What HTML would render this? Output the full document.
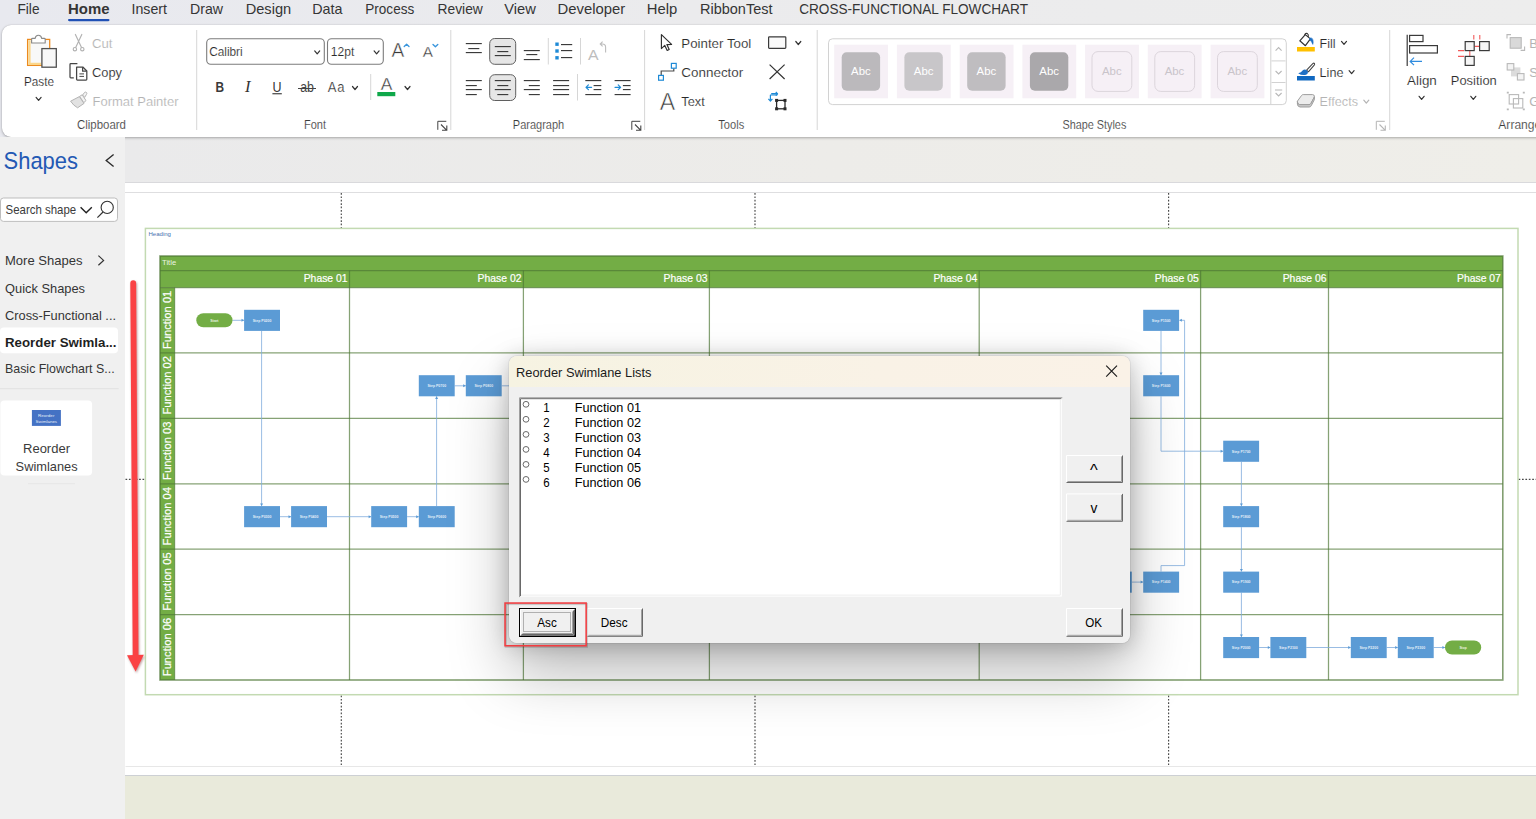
<!DOCTYPE html>
<html lang="en">
<head>
<meta charset="utf-8">
<title>Cross-Functional Flowchart - Reorder Swimlane Lists</title>
<style>
html,body{margin:0;padding:0;background:#f0f0f0;}
body{width:1536px;height:819px;overflow:hidden;font-family:"Liberation Sans",sans-serif;}
#app{position:relative;width:1536px;height:819px;overflow:hidden;background:#f0f0f0;}
#app svg{position:absolute;left:0;top:0;overflow:visible;}
#app svg text{font-family:"Liberation Sans",sans-serif;white-space:pre;}
.abs{position:absolute;}
#tabbar{left:0;top:0;width:1536px;height:140px;background:linear-gradient(90deg,#e8e9ef 0%,#ebebed 45%,#ededed 100%);}
#ribbon{left:2px;top:25px;width:1560px;height:111.5px;background:#fff;border-radius:9px;box-shadow:0 1px 3px rgba(0,0,0,.28),0 0 1px rgba(0,0,0,.2);}
#sidebar{left:0;top:137px;width:125px;height:682px;background:#f0f0f0;}
#strip{left:125px;top:137px;width:1411px;height:45px;background:linear-gradient(90deg,#eaeaeb 0%,#edece9 50%,#efeee9 100%);z-index:0;}
#page{left:125px;top:182px;width:1411px;height:593px;background:#fff;border-top:1px solid #d9d9dc;box-sizing:border-box;}
#below{left:125px;top:775px;width:1411px;height:44px;background:#e9eadb;border-top:1px solid #cdd0d4;box-sizing:border-box;}
#dlgshadow{left:509px;top:355.5px;width:621px;height:287px;border-radius:8px;box-shadow:0 30px 60px rgba(0,0,0,.27),0 2px 21px rgba(0,0,0,.22),0 0 1px rgba(0,0,0,.5);background:#f0f0f0;}
#dlg{left:509px;top:355.5px;width:621px;height:287px;border-radius:8px;background:#f0f0f0;overflow:hidden;}
#dlgtitle{left:0;top:0;width:100%;height:31.5px;background:linear-gradient(90deg,#f6f3e2 0%,#f9f2e6 60%,#faf2e7 100%);}
</style>
</head>
<body>
<div id="app">
<div id="tabbar" class="abs"></div>
<div id="strip" class="abs"></div>
<div id="ribbon" class="abs"></div>
<div id="sidebar" class="abs"></div>
<div id="page" class="abs"></div>
<div id="below" class="abs"></div>
<svg id="ribbonsvg" width="1536" height="140" viewBox="0 0 1536 140">
<text x="17.5" y="13.7" font-size="15" fill="#353535" textLength="22.0" lengthAdjust="spacingAndGlyphs">File</text>
<text x="68" y="13.7" font-size="15" fill="#353535" textLength="41.5" lengthAdjust="spacingAndGlyphs" font-weight="bold">Home</text>
<text x="131.5" y="13.7" font-size="15" fill="#353535" textLength="35.5" lengthAdjust="spacingAndGlyphs">Insert</text>
<text x="190" y="13.7" font-size="15" fill="#353535" textLength="33" lengthAdjust="spacingAndGlyphs">Draw</text>
<text x="245.7" y="13.7" font-size="15" fill="#353535" textLength="45.5" lengthAdjust="spacingAndGlyphs">Design</text>
<text x="312.3" y="13.7" font-size="15" fill="#353535" textLength="30.2" lengthAdjust="spacingAndGlyphs">Data</text>
<text x="365.3" y="13.7" font-size="15" fill="#353535" textLength="48.9" lengthAdjust="spacingAndGlyphs">Process</text>
<text x="437.5" y="13.7" font-size="15" fill="#353535" textLength="45.3" lengthAdjust="spacingAndGlyphs">Review</text>
<text x="504.2" y="13.7" font-size="15" fill="#353535" textLength="31.6" lengthAdjust="spacingAndGlyphs">View</text>
<text x="557.5" y="13.7" font-size="15" fill="#353535" textLength="67.8" lengthAdjust="spacingAndGlyphs">Developer</text>
<text x="646.7" y="13.7" font-size="15" fill="#353535" textLength="30.5" lengthAdjust="spacingAndGlyphs">Help</text>
<text x="700" y="13.7" font-size="15" fill="#353535" textLength="72.5" lengthAdjust="spacingAndGlyphs">RibbonTest</text>
<text x="799.2" y="13.7" font-size="15" fill="#353535" textLength="228.8" lengthAdjust="spacingAndGlyphs">CROSS-FUNCTIONAL FLOWCHART</text>
<rect x="68" y="19" width="41.5" height="2.2" rx="1.1" fill="#1f50b5"/>
<rect x="196.2" y="30" width="1" height="100" fill="#d6d6d6"/>
<rect x="450.3" y="30" width="1" height="100" fill="#d6d6d6"/>
<rect x="644.1" y="30" width="1" height="100" fill="#d6d6d6"/>
<rect x="816.7" y="30" width="1" height="100" fill="#d6d6d6"/>
<rect x="1389.2" y="30" width="1" height="100" fill="#d6d6d6"/>
<text x="77" y="129.2" font-size="12" fill="#3b3b3b" textLength="49" lengthAdjust="spacingAndGlyphs" stroke="#fff" stroke-width="0.14">Clipboard</text>
<text x="304" y="129.2" font-size="12" fill="#3b3b3b" textLength="22" lengthAdjust="spacingAndGlyphs" stroke="#fff" stroke-width="0.14">Font</text>
<text x="512.8" y="129.2" font-size="12" fill="#3b3b3b" textLength="51.4" lengthAdjust="spacingAndGlyphs" stroke="#fff" stroke-width="0.14">Paragraph</text>
<text x="718.3" y="129.2" font-size="12" fill="#3b3b3b" textLength="25.9" lengthAdjust="spacingAndGlyphs" stroke="#fff" stroke-width="0.14">Tools</text>
<text x="1062.5" y="129.2" font-size="12" fill="#3b3b3b" textLength="63.8" lengthAdjust="spacingAndGlyphs" stroke="#fff" stroke-width="0.14">Shape Styles</text>
<text x="1498.3" y="129.2" font-size="12" fill="#3b3b3b" textLength="43" lengthAdjust="spacingAndGlyphs" stroke="#fff" stroke-width="0.14">Arrange</text>
<path d="M437.8 129.8V121.3H446.3" fill="none" stroke="#444" stroke-width="1"/><path d="M441.0 124.5L446.8 130.3M446.8 125.5V130.3H442.0" fill="none" stroke="#444" stroke-width="1.1"/>
<path d="M631.8 129.8V121.3H640.3" fill="none" stroke="#444" stroke-width="1"/><path d="M635.0 124.5L640.8 130.3M640.8 125.5V130.3H636.0" fill="none" stroke="#444" stroke-width="1.1"/>
<path d="M1376.3 129.8V121.3H1384.8" fill="none" stroke="#b5b5b5" stroke-width="1"/><path d="M1379.5 124.5L1385.3 130.3M1385.3 125.5V130.3H1380.5" fill="none" stroke="#b5b5b5" stroke-width="1.1"/>
<g><rect x="27.6" y="39.4" width="22.1" height="26" fill="#f8f8f8" stroke="#ec8a1e" stroke-width="1.25"/><path d="M29.5 40.2V63.9H41.4" fill="none" stroke="#fbd68a" stroke-width="2.2"/><path d="M31.6 43V39.2Q31.6 38.3 32.5 38.3H35.2Q35.5 35.2 38.4 35.2Q41.3 35.2 41.6 38.3H44.3Q45.2 38.3 45.2 39.2V43Z" fill="#fff" stroke="#8a8a8a" stroke-width="1.15" stroke-linejoin="round"/><rect x="41.9" y="48.6" width="14.4" height="18.6" fill="#f8f8f8" stroke="#505050" stroke-width="1.3"/></g>
<text x="24" y="85.8" font-size="13" fill="#2a2a2a" textLength="30" lengthAdjust="spacingAndGlyphs" stroke="#fff" stroke-width="0.14">Paste</text>
<path d="M36.1 97.4L38.6 100.4L41.1 97.4" fill="none" stroke="#333" stroke-width="1.2" stroke-linecap="round" stroke-linejoin="round"/>
<g fill="none" stroke="#b2b2b2" stroke-width="1.15" stroke-linecap="round"><path d="M75.4 34.4L81.4 47.3M81.8 34.4L75.8 47.3"/><circle cx="74.9" cy="49.2" r="1.7"/><circle cx="82.3" cy="49.2" r="1.7"/></g>
<text x="92" y="47.8" font-size="13" fill="#b4b4b4" textLength="20.5" lengthAdjust="spacingAndGlyphs" stroke="#fff" stroke-width="0.14">Cut</text>
<g fill="none" stroke="#454545" stroke-width="1.25" stroke-linejoin="round"><path d="M73.8 77.8H70.8Q70 77.8 70 77V64.4Q70 63.6 70.8 63.6H77.4"/><path d="M76.6 67H82.8L86.8 71V79.2Q86.8 80 86 80H77.4Q76.6 80 76.6 79.2Z" fill="#fff"/><path d="M82.6 67.2V71.2H86.6"/><path d="M79.4 73.9H84M79.4 76.4H84" stroke-width="1"/></g>
<text x="92" y="77" font-size="13" fill="#2a2a2a" textLength="30" lengthAdjust="spacingAndGlyphs" stroke="#fff" stroke-width="0.14">Copy</text>
<g fill="#e2e2e2" stroke="#b4b4b4" stroke-width="1" stroke-linejoin="round"><path d="M70.6 101.2L79.4 96.6L84 103.4L77.6 107.8Q73.4 105.6 70.6 101.2Z"/><path d="M79.6 96.4L82.2 94.8L86 100.6L83.8 102.6Z" fill="#f3f3f3"/><path d="M82.6 95L84.6 92.4Q85.8 91.6 86.6 92.6Q87.2 93.6 86.4 94.6L84.6 97.4Z" fill="#f3f3f3"/></g>
<text x="92.5" y="106" font-size="13" fill="#b4b4b4" textLength="86" lengthAdjust="spacingAndGlyphs" stroke="#fff" stroke-width="0.14">Format Painter</text>
<rect x="206.7" y="38.8" width="117.6" height="25.4" rx="4" fill="#fff" stroke="#7c7c7c" stroke-width="1.1"/>
<rect x="327.5" y="38.8" width="55.8" height="25.4" rx="4" fill="#fff" stroke="#7c7c7c" stroke-width="1.1"/>
<text x="209.2" y="55.8" font-size="13" fill="#2a2a2a" textLength="33.5" lengthAdjust="spacingAndGlyphs" stroke="#fff" stroke-width="0.14">Calibri</text>
<text x="330.8" y="55.8" font-size="13" fill="#2a2a2a" textLength="23.5" lengthAdjust="spacingAndGlyphs" stroke="#fff" stroke-width="0.14">12pt</text>
<path d="M314.7 50.9L317.2 53.9L319.7 50.9" fill="none" stroke="#333" stroke-width="1.2" stroke-linecap="round" stroke-linejoin="round"/>
<path d="M374.1 50.9L376.6 53.9L379.1 50.9" fill="none" stroke="#333" stroke-width="1.2" stroke-linecap="round" stroke-linejoin="round"/>
<text x="391.6" y="56.9" font-size="20" fill="#3a3a3a" textLength="12.8" lengthAdjust="spacingAndGlyphs" stroke="#fff" stroke-width="0.5">A</text>
<path d="M404.2 46.6L406.6 44.2L409 46.6" fill="none" stroke="#3a96dd" stroke-width="1.35" stroke-linecap="round" stroke-linejoin="round"/>
<text x="422.8" y="56.9" font-size="15.2" fill="#3a3a3a" textLength="10.2" lengthAdjust="spacingAndGlyphs" stroke="#fff" stroke-width="0.3">A</text>
<path d="M433 44.4L435.4 46.8L437.8 44.4" fill="none" stroke="#3a96dd" stroke-width="1.35" stroke-linecap="round" stroke-linejoin="round"/>
<text x="215.6" y="91.7" font-size="15" fill="#3a3a3a" textLength="8.6" lengthAdjust="spacingAndGlyphs" font-weight="bold">B</text>
<text x="245" y="91.8" font-size="16.5" fill="#333" font-style="italic" style="font-family:'Liberation Serif',serif">I</text>
<text x="272.6" y="91.7" font-size="14.6" fill="#333" textLength="9" lengthAdjust="spacingAndGlyphs">U</text>
<rect x="272.4" y="93.2" width="9.4" height="1.1" fill="#333"/>
<text x="300.2" y="91.9" font-size="14" fill="#444" textLength="13.8" lengthAdjust="spacingAndGlyphs">ab</text>
<rect x="298" y="88" width="18" height="1" fill="#444"/>
<text x="327.8" y="91.9" font-size="14.4" fill="#333" textLength="17.4" lengthAdjust="spacingAndGlyphs" letter-spacing="0.8" stroke="#fff" stroke-width="0.2">Aa</text>
<path d="M352.5 86.5L355 89.5L357.5 86.5" fill="none" stroke="#333" stroke-width="1.2" stroke-linecap="round" stroke-linejoin="round"/>
<rect x="370.2" y="74" width="1" height="26" fill="#d6d6d6"/>
<text x="380.7" y="90.4" font-size="16.3" fill="#3a3a3a" textLength="11.6" lengthAdjust="spacingAndGlyphs" stroke="#fff" stroke-width="0.3">A</text>
<rect x="377.3" y="92" width="18" height="4.2" fill="#0fa84a"/>
<path d="M405.0 86.5L407.5 89.5L410.0 86.5" fill="none" stroke="#333" stroke-width="1.2" stroke-linecap="round" stroke-linejoin="round"/>
<rect x="489.7" y="38.5" width="26" height="25.8" rx="5" fill="#e6e6e6" stroke="#5f5f5f" stroke-width="1"/>
<rect x="489.7" y="74.7" width="26" height="25.8" rx="5" fill="#e6e6e6" stroke="#5f5f5f" stroke-width="1"/>
<rect x="465.8" y="43" width="16" height="1.15" fill="#3b3b3b"/><rect x="468.3" y="48" width="11" height="1.15" fill="#3b3b3b"/><rect x="465.8" y="52" width="16" height="1.15" fill="#3b3b3b"/>
<rect x="494.8" y="46" width="16" height="1.15" fill="#3b3b3b"/><rect x="497.3" y="51" width="11" height="1.15" fill="#3b3b3b"/><rect x="494.8" y="55" width="16" height="1.15" fill="#3b3b3b"/>
<rect x="523.8" y="50" width="16" height="1.15" fill="#3b3b3b"/><rect x="526.3" y="54" width="11" height="1.15" fill="#3b3b3b"/><rect x="523.8" y="59" width="16" height="1.15" fill="#3b3b3b"/>
<rect x="547.8" y="38" width="1" height="26.5" fill="#d6d6d6"/>
<rect x="555.3" y="42.5" width="3.4" height="3.4" fill="#1e8ad6"/>
<rect x="561" y="44" width="11.2" height="1.15" fill="#3b3b3b"/>
<rect x="555.3" y="49.3" width="3.4" height="3.4" fill="#1e8ad6"/>
<rect x="561" y="50" width="11.2" height="1.15" fill="#3b3b3b"/>
<rect x="555.3" y="56.099999999999994" width="3.4" height="3.4" fill="#1e8ad6"/>
<rect x="561" y="57" width="11.2" height="1.15" fill="#3b3b3b"/>
<rect x="580" y="38" width="1" height="26.5" fill="#d6d6d6"/>
<text x="588" y="59.7" font-size="15" fill="#bdbdbd" textLength="10.6" lengthAdjust="spacingAndGlyphs">A</text>
<path d="M605.6 52.4V47.2Q605.6 44 602.4 44H600.4M602.6 41.6L600.2 44L602.6 46.4" fill="none" stroke="#bdbdbd" stroke-width="1.1"/>
<rect x="465.8" y="80" width="16" height="1.15" fill="#3b3b3b"/><rect x="465.8" y="85" width="11" height="1.15" fill="#3b3b3b"/><rect x="465.8" y="89" width="16" height="1.15" fill="#3b3b3b"/><rect x="465.8" y="94" width="11" height="1.15" fill="#3b3b3b"/>
<rect x="494.8" y="80" width="16" height="1.15" fill="#3b3b3b"/><rect x="497.3" y="85" width="11" height="1.15" fill="#3b3b3b"/><rect x="494.8" y="89" width="16" height="1.15" fill="#3b3b3b"/><rect x="497.3" y="94" width="11" height="1.15" fill="#3b3b3b"/>
<rect x="523.8" y="80" width="16" height="1.15" fill="#3b3b3b"/><rect x="528.8" y="85" width="11" height="1.15" fill="#3b3b3b"/><rect x="523.8" y="89" width="16" height="1.15" fill="#3b3b3b"/><rect x="528.8" y="94" width="11" height="1.15" fill="#3b3b3b"/>
<rect x="553.1" y="80" width="16" height="1.15" fill="#3b3b3b"/><rect x="553.1" y="85" width="16" height="1.15" fill="#3b3b3b"/><rect x="553.1" y="89" width="16" height="1.15" fill="#3b3b3b"/><rect x="553.1" y="94" width="16" height="1.15" fill="#3b3b3b"/>
<rect x="577" y="74" width="1" height="26.5" fill="#d6d6d6"/>
<rect x="585.3" y="80" width="16" height="1.15" fill="#3b3b3b"/><rect x="585.3" y="94" width="16" height="1.15" fill="#3b3b3b"/>
<rect x="593.6" y="85" width="7.7" height="1.15" fill="#3b3b3b"/><rect x="593.6" y="89" width="7.7" height="1.15" fill="#3b3b3b"/>
<path d="M591.6 87.3H586M588.4 84.9L586 87.3L588.4 89.7" fill="none" stroke="#1e8ad6" stroke-width="1.2" stroke-linecap="round" stroke-linejoin="round"/>
<rect x="614.6" y="80" width="16" height="1.15" fill="#3b3b3b"/><rect x="614.6" y="94" width="16" height="1.15" fill="#3b3b3b"/>
<rect x="622.9" y="85" width="7.7" height="1.15" fill="#3b3b3b"/><rect x="622.9" y="89" width="7.7" height="1.15" fill="#3b3b3b"/>
<path d="M615 87.3H620.6M618.2 84.9L620.6 87.3L618.2 89.7" fill="none" stroke="#1e8ad6" stroke-width="1.2" stroke-linecap="round" stroke-linejoin="round"/>
<path d="M661.4 34.6V48.6L664.8 45.4L667.2 50.4L669.2 49.4L666.9 44.6L671.6 44.4Z" fill="#fff" stroke="#2f2f2f" stroke-width="1.15" stroke-linejoin="round"/>
<text x="681.3" y="47.8" font-size="13" fill="#2a2a2a" textLength="70" lengthAdjust="spacingAndGlyphs" stroke="#fff" stroke-width="0.14">Pointer Tool</text>
<rect x="768.6" y="36.8" width="17.2" height="11.6" rx="0.8" fill="#fafafa" stroke="#3a3a3a" stroke-width="1.2"/>
<path d="M795.8 41.5L798.3 44.5L800.8 41.5" fill="none" stroke="#333" stroke-width="1.2" stroke-linecap="round" stroke-linejoin="round"/>
<path d="M661.2 75.4V71H673.8V68.2" fill="none" stroke="#4a4a4a" stroke-width="1.2"/>
<rect x="658.6" y="75.4" width="4.8" height="4.8" fill="#fff" stroke="#1e8ad6" stroke-width="1.2"/>
<rect x="671.4" y="63.4" width="4.8" height="4.8" fill="#fff" stroke="#1e8ad6" stroke-width="1.2"/>
<text x="681.3" y="77" font-size="13" fill="#2a2a2a" textLength="62" lengthAdjust="spacingAndGlyphs" stroke="#fff" stroke-width="0.14">Connector</text>
<path d="M769.6 64.6L784.6 79M784.6 64.6L769.6 79" fill="none" stroke="#333" stroke-width="1.2"/>
<text x="659.8" y="109.6" font-size="24.5" fill="#3a3a3a" textLength="15.4" lengthAdjust="spacingAndGlyphs" stroke="#fff" stroke-width="0.65">A</text>
<text x="681.3" y="106" font-size="13" fill="#2a2a2a" textLength="23.4" lengthAdjust="spacingAndGlyphs" stroke="#fff" stroke-width="0.14">Text</text>
<g fill="none" stroke="#1e8ad6" stroke-width="1.2" stroke-linejoin="round"><path d="M770.4 100.6V95H777.4M771.2 93.6H777.4"/><path d="M768.4 98.8L770.4 101L772.4 98.8M775.8 92L777.6 93.8L775.8 95.6"/></g>
<rect x="776.6" y="100.4" width="8.4" height="8.4" fill="none" stroke="#2a2a2a" stroke-width="1.3"/>
<rect x="775.1" y="98.9" width="3" height="3" fill="#2a2a2a"/>
<rect x="783.5" y="98.9" width="3" height="3" fill="#2a2a2a"/>
<rect x="775.1" y="107.3" width="3" height="3" fill="#2a2a2a"/>
<rect x="783.5" y="107.3" width="3" height="3" fill="#2a2a2a"/>
<rect x="828.5" y="38.8" width="457.8" height="65.8" rx="4" fill="#fff" stroke="#d2d2d2" stroke-width="1"/>
<rect x="834.2" y="44.7" width="53.8" height="53.6" fill="#f6f0f6"/>
<rect x="841.7" y="52.2" width="38.4" height="38.6" rx="5" fill="#bbb9bc"/>
<text x="860.9" y="75.2" font-size="10.5" fill="#ffffff" textLength="19.6" lengthAdjust="spacingAndGlyphs" text-anchor="middle">Abc</text>
<rect x="896.9" y="44.7" width="53.8" height="53.6" fill="#f6f0f6"/>
<rect x="904.4" y="52.2" width="38.4" height="38.6" rx="5" fill="#c8c6c9"/>
<text x="923.6" y="75.2" font-size="10.5" fill="#ffffff" textLength="19.6" lengthAdjust="spacingAndGlyphs" text-anchor="middle">Abc</text>
<rect x="959.7" y="44.7" width="53.8" height="53.6" fill="#f6f0f6"/>
<rect x="967.2" y="52.2" width="38.4" height="38.6" rx="5" fill="#bfbdc0"/>
<text x="986.4" y="75.2" font-size="10.5" fill="#ffffff" textLength="19.6" lengthAdjust="spacingAndGlyphs" text-anchor="middle">Abc</text>
<rect x="1022.4" y="44.7" width="53.8" height="53.6" fill="#f6f0f6"/>
<rect x="1029.9" y="52.2" width="38.4" height="38.6" rx="5" fill="#aaa8ab"/>
<text x="1049.1" y="75.2" font-size="10.5" fill="#ffffff" textLength="19.6" lengthAdjust="spacingAndGlyphs" text-anchor="middle">Abc</text>
<rect x="1085.1" y="44.7" width="53.8" height="53.6" fill="#f6f0f6"/>
<rect x="1092.0" y="51.6" width="39.8" height="39.8" rx="6" fill="#f6f0f6" stroke="#dcd5dc" stroke-width="1"/>
<text x="1111.8" y="75.2" font-size="10.5" fill="#c9c4ca" textLength="19.6" lengthAdjust="spacingAndGlyphs" text-anchor="middle">Abc</text>
<rect x="1147.8" y="44.7" width="53.8" height="53.6" fill="#f6f0f6"/>
<rect x="1154.8" y="51.6" width="39.8" height="39.8" rx="6" fill="#f6f0f6" stroke="#dcd5dc" stroke-width="1"/>
<text x="1174.5" y="75.2" font-size="10.5" fill="#c9c4ca" textLength="19.6" lengthAdjust="spacingAndGlyphs" text-anchor="middle">Abc</text>
<rect x="1210.6" y="44.7" width="53.8" height="53.6" fill="#f6f0f6"/>
<rect x="1217.5" y="51.6" width="39.8" height="39.8" rx="6" fill="#f6f0f6" stroke="#dcd5dc" stroke-width="1"/>
<text x="1237.3" y="75.2" font-size="10.5" fill="#c9c4ca" textLength="19.6" lengthAdjust="spacingAndGlyphs" text-anchor="middle">Abc</text>
<rect x="1270.3" y="39" width="1" height="65.4" fill="#d2d2d2"/>
<rect x="1271.5" y="60.4" width="14" height="1" fill="#d2d2d2"/><rect x="1271.5" y="82" width="14" height="1" fill="#d2d2d2"/>
<path d="M1275.6 50.6L1278.6 47.6L1281.6 50.6" fill="none" stroke="#b8b8b8" stroke-width="1.1"/>
<path d="M1275.6 71L1278.6 74L1281.6 71" fill="none" stroke="#b8b8b8" stroke-width="1.1"/>
<path d="M1275 90H1282.2M1275.6 93L1278.6 96L1281.6 93" fill="none" stroke="#b8b8b8" stroke-width="1.1"/>
<path d="M1299.8 40.8L1305.3 34.6L1310.4 38.9L1305.4 45.7Z" fill="#fff" stroke="#333" stroke-width="1.2" stroke-linejoin="round"/>
<path d="M1304.6 35.4Q1305.4 32.6 1307.4 33.6Q1308.8 34.6 1308.2 37" fill="none" stroke="#333" stroke-width="1.1"/>
<path d="M1309.6 38.2Q1312.4 37 1313 40.4Q1313.4 42.6 1312.8 44.4Q1311.8 41.2 1309.8 40Z" fill="#1e6fc4" stroke="#1e6fc4" stroke-width="0.6"/>
<rect x="1297" y="47" width="17.8" height="4.5" fill="#ffc000"/>
<text x="1319.6" y="47.9" font-size="13" fill="#2a2a2a" textLength="16" lengthAdjust="spacingAndGlyphs" stroke="#fff" stroke-width="0.14">Fill</text>
<path d="M1341.5 41.4L1344 44.4L1346.5 41.4" fill="none" stroke="#333" stroke-width="1.2" stroke-linecap="round" stroke-linejoin="round"/>
<path d="M1306.6 70.2L1312.8 63.6Q1313.8 62.8 1314.4 63.4Q1315 64.2 1314.2 65.2L1308.4 71.8Z" fill="#fff" stroke="#444" stroke-width="1.05" stroke-linejoin="round"/>
<path d="M1298.2 73.2Q1301.4 72.8 1302.6 70.6Q1304.4 68.4 1306.8 70.2Q1309 72.2 1307 74.2Q1302.6 76.4 1298.2 73.2Z" fill="#1e6fc4"/>
<rect x="1297" y="76" width="17.8" height="4.5" fill="#1068c0"/>
<text x="1319.6" y="77.1" font-size="13" fill="#2a2a2a" textLength="23.8" lengthAdjust="spacingAndGlyphs" stroke="#fff" stroke-width="0.14">Line</text>
<path d="M1349.1 70.6L1351.6 73.6L1354.1 70.6" fill="none" stroke="#333" stroke-width="1.2" stroke-linecap="round" stroke-linejoin="round"/>
<path d="M1297.4 101.2L1301.6 95.4Q1302.2 94.6 1303.2 94.6H1312.6Q1314.8 94.8 1314.4 97L1310.8 103.6Q1310.2 104.6 1309 104.6H1299.4Q1297 104.2 1297.4 101.2Z" fill="#ececec" stroke="#9e9e9e" stroke-width="1" stroke-linejoin="round"/>
<path d="M1297.4 101.6V104.2Q1297.6 106.6 1300 107H1309.2Q1310.6 107 1311.2 105.8L1314.4 99.6V97L1310.8 103.6Q1310.2 104.6 1309 104.6H1299.4Q1297.4 104.2 1297.4 101.6Z" fill="#c9c9c9" stroke="#9e9e9e" stroke-width="1" stroke-linejoin="round"/>
<text x="1319.6" y="106.4" font-size="13" fill="#b4b4b4" textLength="38.4" lengthAdjust="spacingAndGlyphs" stroke="#fff" stroke-width="0.14">Effects</text>
<path d="M1363.8 100.1L1366.3 103.1L1368.8 100.1" fill="none" stroke="#b4b4b4" stroke-width="1.2" stroke-linecap="round" stroke-linejoin="round"/>
<g fill="#fff" stroke="#3a3a3a" stroke-width="1.2"><path d="M1407.2 34.8V66" fill="none"/><rect x="1409.6" y="35.4" width="13.4" height="6.2"/><rect x="1409.6" y="45.6" width="27.8" height="7.4"/></g>
<path d="M1422 61.4H1410.4M1414 57.6L1410.2 61.4L1414 65.2" fill="none" stroke="#2f8bde" stroke-width="1.2"/>
<text x="1407" y="85" font-size="13" fill="#2a2a2a" textLength="29.8" lengthAdjust="spacingAndGlyphs" stroke="#fff" stroke-width="0.14">Align</text>
<path d="M1419.1 96.3L1421.6 99.3L1424.1 96.3" fill="none" stroke="#333" stroke-width="1.2" stroke-linecap="round" stroke-linejoin="round"/>
<g fill="none" stroke="#f25a5a" stroke-width="1.1"><path d="M1473.8 35V39.6M1479.8 35V39.6M1458 50.6H1464M1458 56.4H1464M1469.8 50.8V56M1474.8 46.4H1479"/></g>
<g fill="#f6f6f6" stroke="#3a3a3a" stroke-width="1.2"><rect x="1465.2" y="41.6" width="9" height="9"/><rect x="1479.6" y="41.6" width="9.6" height="9"/><rect x="1465.2" y="56.4" width="9" height="9"/></g>
<text x="1450.8" y="85" font-size="13" fill="#2a2a2a" textLength="46" lengthAdjust="spacingAndGlyphs" stroke="#fff" stroke-width="0.14">Position</text>
<path d="M1470.8 96.3L1473.3 99.3L1475.8 96.3" fill="none" stroke="#333" stroke-width="1.2" stroke-linecap="round" stroke-linejoin="round"/>
<g fill="none" stroke="#b9b9b9" stroke-width="1.1"><path d="M1511 34.6H1507V38.6M1520.6 50.4H1524.6V46.4"/><rect x="1510.2" y="37.6" width="11" height="10.6" fill="#d9d9d9"/><rect x="1511" y="67.4" width="9.4" height="9" fill="#dcdcdc" stroke="none"/><rect x="1507.2" y="63.6" width="6.6" height="6.4" fill="#f4f4f4"/><rect x="1517.4" y="73.6" width="6.6" height="6.4" fill="#f4f4f4"/><rect x="1509.2" y="94.6" width="9.4" height="9.4"/><rect x="1513.4" y="98.6" width="9.4" height="9.4"/><path d="M1506.8 92.6H1508.8M1522.8 92.6H1524.8M1506.8 109.4H1508.8M1522.8 109.4H1524.8" stroke-width="1.8"/></g>
<text x="1529.2" y="47.9" font-size="13" fill="#b4b4b4">Bring</text>
<text x="1529.2" y="77.1" font-size="13" fill="#b4b4b4">Send</text>
<text x="1529.2" y="106.4" font-size="13" fill="#b4b4b4">Group</text>
</svg>
<svg id="sidesvg" width="130" height="819" viewBox="0 0 130 819">
<text x="3.6" y="169.3" font-size="24.5" fill="#2359b4" textLength="74.4" lengthAdjust="spacingAndGlyphs">Shapes</text>
<path d="M113.6 154.4L106.2 160.4L113.6 166.4" fill="none" stroke="#2b2b2b" stroke-width="1.35"/>
<rect x="0.5" y="198" width="117" height="23.4" rx="3" fill="#fff" stroke="#bdbdbd" stroke-width="1"/>
<text x="5.6" y="214" font-size="13" fill="#3b3b3b" textLength="70.6" lengthAdjust="spacingAndGlyphs">Search shape</text>
<path d="M80.6 207.2L86.2 212.8L91.8 207.2" fill="none" stroke="#222" stroke-width="1.4"/>
<circle cx="107.2" cy="207.4" r="6.1" fill="none" stroke="#333" stroke-width="1.1"/><path d="M103 212L97.4 217.6" stroke="#333" stroke-width="1.2"/>
<text x="5" y="265.2" font-size="13.6" fill="#353535" textLength="77.6" lengthAdjust="spacingAndGlyphs">More Shapes</text>
<path d="M98.4 255.6L103.6 260.4L98.4 265.2" fill="none" stroke="#333" stroke-width="1.2"/>
<text x="5" y="292.5" font-size="13.6" fill="#353535" textLength="80" lengthAdjust="spacingAndGlyphs">Quick Shapes</text>
<text x="5" y="319.5" font-size="13.6" fill="#353535" textLength="111" lengthAdjust="spacingAndGlyphs">Cross-Functional ...</text>
<rect x="0" y="327.6" width="118" height="25.6" rx="4" fill="#fff"/>
<text x="5" y="346.7" font-size="13.6" fill="#1f1f1f" textLength="111.5" lengthAdjust="spacingAndGlyphs" font-weight="bold">Reorder Swimla...</text>
<text x="5" y="373.3" font-size="13.6" fill="#353535" textLength="109.6" lengthAdjust="spacingAndGlyphs">Basic Flowchart S...</text>
<rect x="0" y="388.2" width="118.6" height="1" fill="#e1e1e1"/>
<rect x="0.4" y="400.4" width="91.7" height="75.2" rx="4" fill="#fff"/>
<rect x="31.9" y="410" width="29" height="15.9" fill="#4472c4"/>
<text x="38.1" y="417" font-size="4.2" fill="#fff" textLength="16.3" lengthAdjust="spacingAndGlyphs" fill-opacity="0.9">Reorder</text>
<text x="35.5" y="422.6" font-size="4.2" fill="#fff" textLength="21.6" lengthAdjust="spacingAndGlyphs" fill-opacity="0.9">Swimlanes</text>
<text x="23" y="452.5" font-size="13.6" fill="#3b3b3b" textLength="47" lengthAdjust="spacingAndGlyphs">Reorder</text>
<text x="15.6" y="470.6" font-size="13.6" fill="#3b3b3b" textLength="62" lengthAdjust="spacingAndGlyphs">Swimlanes</text>
<rect x="28" y="483.2" width="47" height="1" fill="#e6e6e6"/>
</svg>
<svg id="diagram" width="1536" height="819" viewBox="0 0 1536 819">
<rect x="125" y="192" width="1411" height="1" fill="#dedee0"/>
<rect x="125.5" y="766" width="1411" height="1" fill="#e7e7e7"/>
<path d="M341.3 193V228M341.3 695.5V765" stroke="#484848" stroke-width="1.15" stroke-dasharray="1.7 1.7" fill="none"/>
<path d="M755 193V228M755 695.5V765" stroke="#484848" stroke-width="1.15" stroke-dasharray="1.7 1.7" fill="none"/>
<path d="M1168.6 193V228M1168.6 695.5V765" stroke="#484848" stroke-width="1.15" stroke-dasharray="1.7 1.7" fill="none"/>
<path d="M125.5 479.4H145M1518.6 479.4H1536" stroke="#484848" stroke-width="1.15" stroke-dasharray="1.7 1.7" fill="none"/>
<rect x="145.4" y="228.4" width="1372.6" height="466.3" fill="#fff" stroke="#c3dab2" stroke-width="1.5"/>
<text x="148.4" y="236.4" font-size="4.6" fill="#4a72b0" textLength="22.6" lengthAdjust="spacingAndGlyphs">Heading</text>
<rect x="160.0" y="256.0" width="1342.8" height="31.5" fill="#73ad45"/>
<rect x="160.0" y="287.5" width="14.699999999999989" height="392.5" fill="#73ad45"/>
<g stroke="#4d7634" fill="none" stroke-opacity="0.68"><path d="M160.0 270.5H1502.8" stroke-width="1.25"/><path d="M160.0 287.5H1502.8" stroke-width="1.25"/><path d="M160.0 352.92H1502.8" stroke-width="1.25"/><path d="M160.0 418.33H1502.8" stroke-width="1.25"/><path d="M160.0 483.75H1502.8" stroke-width="1.25"/><path d="M160.0 549.17H1502.8" stroke-width="1.25"/><path d="M160.0 614.58H1502.8" stroke-width="1.25"/><path d="M349.5 270.5V680.0" stroke-width="1.25"/><path d="M523.4 270.5V680.0" stroke-width="1.25"/><path d="M709.4 270.5V680.0" stroke-width="1.25"/><path d="M979.2 270.5V680.0" stroke-width="1.25"/><path d="M1200.6 270.5V680.0" stroke-width="1.25"/><path d="M1328.5 270.5V680.0" stroke-width="1.25"/><path d="M174.7 287.5V680.0" stroke-width="1"/><rect x="160.0" y="256.0" width="1342.8" height="424.0" stroke-width="1.6" stroke-opacity="0.7"/></g>
<text x="162" y="265.1" font-size="7.1" fill="#fff" textLength="14.2" lengthAdjust="spacingAndGlyphs" fill-opacity="0.88">Title</text>
<text x="347.6" y="282.4" font-size="10.7" fill="#fff" textLength="43.9" lengthAdjust="spacingAndGlyphs" text-anchor="end" stroke="#fff" stroke-width="0.2">Phase 01</text>
<text x="521.5" y="282.4" font-size="10.7" fill="#fff" textLength="43.9" lengthAdjust="spacingAndGlyphs" text-anchor="end" stroke="#fff" stroke-width="0.2">Phase 02</text>
<text x="707.5" y="282.4" font-size="10.7" fill="#fff" textLength="43.9" lengthAdjust="spacingAndGlyphs" text-anchor="end" stroke="#fff" stroke-width="0.2">Phase 03</text>
<text x="977.3000000000001" y="282.4" font-size="10.7" fill="#fff" textLength="43.9" lengthAdjust="spacingAndGlyphs" text-anchor="end" stroke="#fff" stroke-width="0.2">Phase 04</text>
<text x="1198.6999999999998" y="282.4" font-size="10.7" fill="#fff" textLength="43.9" lengthAdjust="spacingAndGlyphs" text-anchor="end" stroke="#fff" stroke-width="0.2">Phase 05</text>
<text x="1326.6" y="282.4" font-size="10.7" fill="#fff" textLength="43.9" lengthAdjust="spacingAndGlyphs" text-anchor="end" stroke="#fff" stroke-width="0.2">Phase 06</text>
<text x="1500.8999999999999" y="282.4" font-size="10.7" fill="#fff" textLength="43.9" lengthAdjust="spacingAndGlyphs" text-anchor="end" stroke="#fff" stroke-width="0.2">Phase 07</text>
<text transform="translate(170.8 319.9) rotate(-90)" x="0" y="0" font-size="10.5" fill="#fff" stroke="#fff" stroke-width="0.2" text-anchor="middle" textLength="58.4" lengthAdjust="spacingAndGlyphs">Function 01</text>
<text transform="translate(170.8 385.3) rotate(-90)" x="0" y="0" font-size="10.5" fill="#fff" stroke="#fff" stroke-width="0.2" text-anchor="middle" textLength="58.4" lengthAdjust="spacingAndGlyphs">Function 02</text>
<text transform="translate(170.8 450.7) rotate(-90)" x="0" y="0" font-size="10.5" fill="#fff" stroke="#fff" stroke-width="0.2" text-anchor="middle" textLength="58.4" lengthAdjust="spacingAndGlyphs">Function 03</text>
<text transform="translate(170.8 516.2) rotate(-90)" x="0" y="0" font-size="10.5" fill="#fff" stroke="#fff" stroke-width="0.2" text-anchor="middle" textLength="58.4" lengthAdjust="spacingAndGlyphs">Function 04</text>
<text transform="translate(170.8 581.6) rotate(-90)" x="0" y="0" font-size="10.5" fill="#fff" stroke="#fff" stroke-width="0.2" text-anchor="middle" textLength="58.4" lengthAdjust="spacingAndGlyphs">Function 05</text>
<text transform="translate(170.8 647.0) rotate(-90)" x="0" y="0" font-size="10.5" fill="#fff" stroke="#fff" stroke-width="0.2" text-anchor="middle" textLength="58.4" lengthAdjust="spacingAndGlyphs">Function 06</text>
<g fill="none" stroke="#7fabdc" stroke-width="0.8"><path d="M232.5 320.3H244.1"/><path d="M261.6 330.9V506.1"/><path d="M280 516.7H291.1"/><path d="M327 516.7H371.2"/><path d="M407.1 516.7H418.8"/><path d="M436.6 506.1V396.3"/><path d="M454.7 385.8H465.8"/><path d="M501.7 385.8H520"/><path d="M1131.8 582.1H1143.2"/><path d="M1161 571.6V565.6H1184.6V320.3H1179.4"/><path d="M1161 330.9V375.2"/><path d="M1161 396.3V451.2H1223.2"/><path d="M1241.4 461.8V506.1"/><path d="M1241.4 527.2V571.6"/><path d="M1241.4 592.6V637.0"/><path d="M1259.1 647.5H1270.4"/><path d="M1306.3 647.5H1350.8"/><path d="M1386.7 647.5H1397.8"/><path d="M1433.7 647.5H1445"/></g>
<g fill="#5b9bd5" stroke="none"><path d="M244.1 320.3L241.5 318.8V321.8Z"/><path d="M261.6 506.1L260.1 503.5H263.1Z"/><path d="M291.1 516.7L288.5 515.2V518.2Z"/><path d="M371.2 516.7L368.59999999999997 515.2V518.2Z"/><path d="M418.8 516.7L416.2 515.2V518.2Z"/><path d="M436.6 396.3L435.1 398.90000000000003H438.1Z"/><path d="M465.8 385.8L463.2 384.3V387.3Z"/><path d="M1143.2 582.1L1140.6000000000001 580.6V583.6Z"/><path d="M1179.3 320.3L1181.8999999999999 318.8V321.8Z"/><path d="M1161 375.2L1159.5 372.59999999999997H1162.5Z"/><path d="M1223.2 451.2L1220.6000000000001 449.7V452.7Z"/><path d="M1241.4 506.1L1239.9 503.5H1242.9Z"/><path d="M1241.4 571.6L1239.9 569.0H1242.9Z"/><path d="M1241.4 637.0L1239.9 634.4H1242.9Z"/><path d="M1270.4 647.5L1267.8000000000002 646.0V649.0Z"/><path d="M1350.8 647.5L1348.2 646.0V649.0Z"/><path d="M1397.8 647.5L1395.2 646.0V649.0Z"/><path d="M1445 647.5L1442.4 646.0V649.0Z"/></g>
<rect x="244.1" y="309.8" width="35.9" height="21.1" fill="#5b9bd5"/>
<text x="262.1" y="321.6" font-size="4.1" fill="#fff" textLength="18.7" lengthAdjust="spacingAndGlyphs" font-weight="bold" text-anchor="middle" fill-opacity="0.85">Step P0200</text>
<rect x="1143.2" y="309.8" width="35.9" height="21.1" fill="#5b9bd5"/>
<text x="1161.2" y="321.6" font-size="4.1" fill="#fff" textLength="18.7" lengthAdjust="spacingAndGlyphs" font-weight="bold" text-anchor="middle" fill-opacity="0.85">Step P1500</text>
<rect x="418.8" y="375.2" width="35.9" height="21.1" fill="#5b9bd5"/>
<text x="436.8" y="387.1" font-size="4.1" fill="#fff" textLength="18.7" lengthAdjust="spacingAndGlyphs" font-weight="bold" text-anchor="middle" fill-opacity="0.85">Step P0700</text>
<rect x="465.8" y="375.2" width="35.9" height="21.1" fill="#5b9bd5"/>
<text x="483.8" y="387.1" font-size="4.1" fill="#fff" textLength="18.7" lengthAdjust="spacingAndGlyphs" font-weight="bold" text-anchor="middle" fill-opacity="0.85">Step P0800</text>
<rect x="1143.2" y="375.2" width="35.9" height="21.1" fill="#5b9bd5"/>
<text x="1161.2" y="387.1" font-size="4.1" fill="#fff" textLength="18.7" lengthAdjust="spacingAndGlyphs" font-weight="bold" text-anchor="middle" fill-opacity="0.85">Step P1600</text>
<rect x="1223.2" y="440.7" width="35.9" height="21.1" fill="#5b9bd5"/>
<text x="1241.2" y="452.5" font-size="4.1" fill="#fff" textLength="18.7" lengthAdjust="spacingAndGlyphs" font-weight="bold" text-anchor="middle" fill-opacity="0.85">Step P1700</text>
<rect x="244.1" y="506.1" width="35.9" height="21.1" fill="#5b9bd5"/>
<text x="262.1" y="518.0" font-size="4.1" fill="#fff" textLength="18.7" lengthAdjust="spacingAndGlyphs" font-weight="bold" text-anchor="middle" fill-opacity="0.85">Step P0300</text>
<rect x="291.1" y="506.1" width="35.9" height="21.1" fill="#5b9bd5"/>
<text x="309.1" y="518.0" font-size="4.1" fill="#fff" textLength="18.7" lengthAdjust="spacingAndGlyphs" font-weight="bold" text-anchor="middle" fill-opacity="0.85">Step P0400</text>
<rect x="371.2" y="506.1" width="35.9" height="21.1" fill="#5b9bd5"/>
<text x="389.1" y="518.0" font-size="4.1" fill="#fff" textLength="18.7" lengthAdjust="spacingAndGlyphs" font-weight="bold" text-anchor="middle" fill-opacity="0.85">Step P0500</text>
<rect x="418.8" y="506.1" width="35.9" height="21.1" fill="#5b9bd5"/>
<text x="436.8" y="518.0" font-size="4.1" fill="#fff" textLength="18.7" lengthAdjust="spacingAndGlyphs" font-weight="bold" text-anchor="middle" fill-opacity="0.85">Step P0600</text>
<rect x="1223.2" y="506.1" width="35.9" height="21.1" fill="#5b9bd5"/>
<text x="1241.2" y="518.0" font-size="4.1" fill="#fff" textLength="18.7" lengthAdjust="spacingAndGlyphs" font-weight="bold" text-anchor="middle" fill-opacity="0.85">Step P1800</text>
<rect x="1095.9" y="571.6" width="35.9" height="21.1" fill="#5b9bd5"/>
<text x="1113.9" y="583.4" font-size="4.1" fill="#fff" textLength="18.7" lengthAdjust="spacingAndGlyphs" font-weight="bold" text-anchor="middle" fill-opacity="0.85">Step P1300</text>
<rect x="1143.2" y="571.6" width="35.9" height="21.1" fill="#5b9bd5"/>
<text x="1161.2" y="583.4" font-size="4.1" fill="#fff" textLength="18.7" lengthAdjust="spacingAndGlyphs" font-weight="bold" text-anchor="middle" fill-opacity="0.85">Step P1400</text>
<rect x="1223.2" y="571.6" width="35.9" height="21.1" fill="#5b9bd5"/>
<text x="1241.2" y="583.4" font-size="4.1" fill="#fff" textLength="18.7" lengthAdjust="spacingAndGlyphs" font-weight="bold" text-anchor="middle" fill-opacity="0.85">Step P1900</text>
<rect x="1223.2" y="637.0" width="35.9" height="21.1" fill="#5b9bd5"/>
<text x="1241.2" y="648.8" font-size="4.1" fill="#fff" textLength="18.7" lengthAdjust="spacingAndGlyphs" font-weight="bold" text-anchor="middle" fill-opacity="0.85">Step P2000</text>
<rect x="1270.4" y="637.0" width="35.9" height="21.1" fill="#5b9bd5"/>
<text x="1288.4" y="648.8" font-size="4.1" fill="#fff" textLength="18.7" lengthAdjust="spacingAndGlyphs" font-weight="bold" text-anchor="middle" fill-opacity="0.85">Step P2100</text>
<rect x="1350.8" y="637.0" width="35.9" height="21.1" fill="#5b9bd5"/>
<text x="1368.8" y="648.8" font-size="4.1" fill="#fff" textLength="18.7" lengthAdjust="spacingAndGlyphs" font-weight="bold" text-anchor="middle" fill-opacity="0.85">Step P2200</text>
<rect x="1397.8" y="637.0" width="35.9" height="21.1" fill="#5b9bd5"/>
<text x="1415.8" y="648.8" font-size="4.1" fill="#fff" textLength="18.7" lengthAdjust="spacingAndGlyphs" font-weight="bold" text-anchor="middle" fill-opacity="0.85">Step P2300</text>
<rect x="196.3" y="313.3" width="36.2" height="14" rx="7" fill="#73ad45"/>
<text x="214.4" y="321.6" font-size="4.1" fill="#fff" textLength="8.3" lengthAdjust="spacingAndGlyphs" font-weight="bold" text-anchor="middle" fill-opacity="0.85">Start</text>
<rect x="1445" y="640.5" width="36.2" height="14" rx="7" fill="#73ad45"/>
<text x="1463.1" y="648.8" font-size="4.1" fill="#fff" textLength="7.4" lengthAdjust="spacingAndGlyphs" font-weight="bold" text-anchor="middle" fill-opacity="0.85">Stop</text>
<defs><filter id="rs" filterUnits="userSpaceOnUse" x="115" y="270" width="45" height="420"><feGaussianBlur stdDeviation="1.1"/></filter></defs>
<g><path d="M133.2 283.2L135.6 656" stroke="#5a1010" stroke-opacity="0.38" stroke-width="6" stroke-linecap="round" filter="url(#rs)" transform="translate(0.8 1.4)"/><path d="M127 655.2L143.8 654.8L135.6 671.6Z" fill="#5a1010" fill-opacity="0.38" filter="url(#rs)" transform="translate(0.8 1.4)"/><path d="M133.2 283.2L135.6 656" stroke="#fa4244" stroke-width="5.8" stroke-linecap="round"/><path d="M127 655.2L143.8 654.8L135.6 671.6Z" fill="#fa4244"/></g>
</svg>
<div id="dlgshadow" class="abs"></div>
<div id="dlg" class="abs"><div id="dlgtitle" class="abs"></div></div>
<svg id="dlgsvg" width="1536" height="819" viewBox="0 0 1536 819">
<text x="516" y="376.7" font-size="13.5" fill="#1b1b1b" textLength="135.4" lengthAdjust="spacingAndGlyphs">Reorder Swimlane Lists</text>
<path d="M1106.2 365.6L1117 376.6M1117 365.6L1106.2 376.6" stroke="#1b1b1b" stroke-width="1.15" fill="none"/>
<rect x="519" y="397.2" width="542.8" height="199.40000000000003" fill="#fff"/>
<path d="M519 596.6V397.2H1061.8" fill="none" stroke="#a0a0a0" stroke-width="1" transform="translate(0.5 0.5)"/>
<path d="M520 595.6V398.2H1060.8" fill="none" stroke="#696969" stroke-width="1" transform="translate(0.5 0.5)"/>
<path d="M521 595.1H1060.3V399.2" fill="none" stroke="#ededed" stroke-width="1"/>
<circle cx="526" cy="404.3" r="2.9" fill="none" stroke="#5a5a5a" stroke-width="0.9"/>
<text x="543.2" y="411.7" font-size="13" fill="#000" textLength="6.4" lengthAdjust="spacingAndGlyphs">1</text>
<text x="574.8" y="411.7" font-size="13" fill="#000" textLength="66.2" lengthAdjust="spacingAndGlyphs">Function 01</text>
<circle cx="526" cy="419.3" r="2.9" fill="none" stroke="#5a5a5a" stroke-width="0.9"/>
<text x="543.2" y="426.7" font-size="13" fill="#000" textLength="6.4" lengthAdjust="spacingAndGlyphs">2</text>
<text x="574.8" y="426.7" font-size="13" fill="#000" textLength="66.2" lengthAdjust="spacingAndGlyphs">Function 02</text>
<circle cx="526" cy="434.4" r="2.9" fill="none" stroke="#5a5a5a" stroke-width="0.9"/>
<text x="543.2" y="441.8" font-size="13" fill="#000" textLength="6.4" lengthAdjust="spacingAndGlyphs">3</text>
<text x="574.8" y="441.8" font-size="13" fill="#000" textLength="66.2" lengthAdjust="spacingAndGlyphs">Function 03</text>
<circle cx="526" cy="449.4" r="2.9" fill="none" stroke="#5a5a5a" stroke-width="0.9"/>
<text x="543.2" y="456.8" font-size="13" fill="#000" textLength="6.4" lengthAdjust="spacingAndGlyphs">4</text>
<text x="574.8" y="456.8" font-size="13" fill="#000" textLength="66.2" lengthAdjust="spacingAndGlyphs">Function 04</text>
<circle cx="526" cy="464.4" r="2.9" fill="none" stroke="#5a5a5a" stroke-width="0.9"/>
<text x="543.2" y="471.8" font-size="13" fill="#000" textLength="6.4" lengthAdjust="spacingAndGlyphs">5</text>
<text x="574.8" y="471.8" font-size="13" fill="#000" textLength="66.2" lengthAdjust="spacingAndGlyphs">Function 05</text>
<circle cx="526" cy="479.4" r="2.9" fill="none" stroke="#5a5a5a" stroke-width="0.9"/>
<text x="543.2" y="486.8" font-size="13" fill="#000" textLength="6.4" lengthAdjust="spacingAndGlyphs">6</text>
<text x="574.8" y="486.8" font-size="13" fill="#000" textLength="66.2" lengthAdjust="spacingAndGlyphs">Function 06</text>
<rect x="1066" y="455" width="57" height="28" fill="#f0f0f0"/><path d="M1066.5 482.5V455.5H1122.5" fill="none" stroke="#fff" stroke-width="1"/><path d="M1066.5 482.5H1122.5V455.5" fill="none" stroke="#696969" stroke-width="1"/><path d="M1067.5 481.5H1121.5V456.5" fill="none" stroke="#a0a0a0" stroke-width="1"/><text x="1093.9" y="476.4" font-size="16.5" fill="#000" text-anchor="middle">^</text>
<rect x="1066" y="493.4" width="57" height="28.399999999999977" fill="#f0f0f0"/><path d="M1066.5 521.3V493.9H1122.5" fill="none" stroke="#fff" stroke-width="1"/><path d="M1066.5 521.3H1122.5V493.9" fill="none" stroke="#696969" stroke-width="1"/><path d="M1067.5 520.3H1121.5V494.9" fill="none" stroke="#a0a0a0" stroke-width="1"/><text x="1094" y="512.5" font-size="13.8" fill="#000" text-anchor="middle">v</text>
<rect x="519" y="608" width="57" height="29" fill="#f0f0f0"/><rect x="519.5" y="608.5" width="56" height="28" fill="none" stroke="#000" stroke-width="1"/><path d="M520.5 635.5V609.5H574.5" fill="none" stroke="#fff" stroke-width="1"/><path d="M521.5 634.5H573.5V610.5" fill="none" stroke="#696969" stroke-width="1"/><path d="M522.5 633.5H572.5V611.5" fill="none" stroke="#a0a0a0" stroke-width="1"/><path d="M520.5 636H575V609.5" fill="none" stroke="#000" stroke-width="1.2"/><rect x="523.5" y="612.5" width="47" height="19" fill="none" stroke="#b0b0b0" stroke-width="1"/><text x="547" y="627" font-size="12.6" fill="#000" textLength="19.5" lengthAdjust="spacingAndGlyphs" text-anchor="middle">Asc</text>
<rect x="587" y="608" width="56" height="28.799999999999955" fill="#f0f0f0"/><path d="M587.5 636.3V608.5H642.5" fill="none" stroke="#fff" stroke-width="1"/><path d="M587.5 636.3H642.5V608.5" fill="none" stroke="#696969" stroke-width="1"/><path d="M588.5 635.3H641.5V609.5" fill="none" stroke="#a0a0a0" stroke-width="1"/><text x="614.2" y="627" font-size="12.6" fill="#000" textLength="26.8" lengthAdjust="spacingAndGlyphs" text-anchor="middle">Desc</text>
<rect x="1066" y="608" width="57" height="28.799999999999955" fill="#f0f0f0"/><path d="M1066.5 636.3V608.5H1122.5" fill="none" stroke="#fff" stroke-width="1"/><path d="M1066.5 636.3H1122.5V608.5" fill="none" stroke="#696969" stroke-width="1"/><path d="M1067.5 635.3H1121.5V609.5" fill="none" stroke="#a0a0a0" stroke-width="1"/><text x="1093.6" y="627" font-size="12.6" fill="#000" textLength="16.8" lengthAdjust="spacingAndGlyphs" text-anchor="middle">OK</text>
<rect x="505.8" y="604" width="81.1" height="42.7" fill="none" stroke="#000" stroke-opacity="0.16" stroke-width="2.2"/>
<rect x="505.05" y="603.05" width="81.1" height="42.7" fill="none" stroke="#f23d41" stroke-width="1.55"/>
</svg>
</div>
</body>
</html>
